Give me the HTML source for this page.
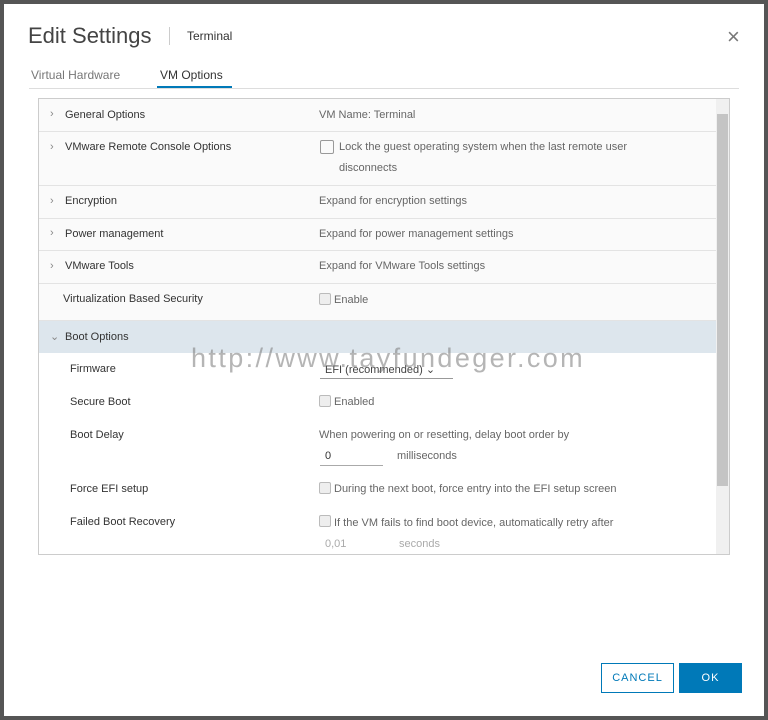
<!DOCTYPE html>
<html><head><style>
body{margin:0;width:768px;height:720px;background:#555;font-family:"Liberation Sans",sans-serif;position:relative;overflow:hidden}
.dlg{position:absolute;left:4px;top:4px;width:760px;height:712px;background:#fff}
.a{position:absolute;white-space:nowrap}
.t{font-size:11px;color:#333}
.g{font-size:11px;color:#666}
.row{position:absolute;left:0;width:678px;border-bottom:1px solid #e3e3e3}
.chev{position:absolute;font-size:11px;color:#888}
.cb{position:absolute;width:10px;height:10px;border:1px solid #bbb;background:#eee;border-radius:2px}
</style></head><body>
<div class="dlg"></div>
<div class="a" style="left:28px;top:23px;font-size:22px;color:#444">Edit Settings</div>
<div class="a" style="left:169px;top:27px;width:1px;height:18px;background:#ccc"></div>
<div class="a" style="left:187px;top:29px;font-size:12px;color:#333">Terminal</div>
<div class="a" style="left:727px;top:24px;font-size:22px;color:#777;font-weight:300">×</div>
<div class="a" style="left:31px;top:68px;font-size:12px;color:#777">Virtual Hardware</div>
<div class="a" style="left:160px;top:68px;font-size:12px;color:#333">VM Options</div>
<div class="a" style="left:157px;top:86px;width:75px;height:2px;background:#0079b8"></div>
<div class="a" style="left:29px;top:88px;width:710px;height:1px;background:#ddd"></div>
<div class="a" style="left:38px;top:98px;width:692px;height:457px;border:1px solid #ccc;box-sizing:border-box;background:#fff;overflow:hidden">
 <div class="row" style="top:0;height:32px;background:#fafafa"><span class="chev" style="left:11px;top:9px">›</span><span class="a t" style="left:26px;top:10px">General Options</span><span class="a g" style="left:280px;top:10px">VM Name: Terminal</span></div>
 <div class="row" style="top:33px;height:53px;background:#fafafa"><span class="chev" style="left:11px;top:9px">›</span><span class="a t" style="left:26px;top:9px">VMware Remote Console Options</span><span class="a" style="left:281px;top:8px;width:12px;height:12px;border:1px solid #999;border-radius:2px"></span><span class="a g" style="left:300px;top:5px;line-height:21px;white-space:normal;width:340px">Lock the guest operating system when the last remote user disconnects</span></div>
 <div class="row" style="top:87px;height:32px;background:#fafafa"><span class="chev" style="left:11px;top:9px">›</span><span class="a t" style="left:26px;top:9px">Encryption</span><span class="a g" style="left:280px;top:9px">Expand for encryption settings</span></div>
 <div class="row" style="top:120px;height:31px;background:#fafafa"><span class="chev" style="left:11px;top:8px">›</span><span class="a t" style="left:26px;top:9px">Power management</span><span class="a g" style="left:280px;top:9px">Expand for power management settings</span></div>
 <div class="row" style="top:152px;height:32px;background:#fafafa"><span class="chev" style="left:11px;top:9px">›</span><span class="a t" style="left:26px;top:9px">VMware Tools</span><span class="a g" style="left:280px;top:9px">Expand for VMware Tools settings</span></div>
 <div class="row" style="top:185px;height:36px;background:#fafafa"><span class="a t" style="left:24px;top:9px">Virtualization Based Security</span><span class="cb" style="left:280px;top:9px"></span><span class="a g" style="left:295px;top:10px">Enable</span></div>
 <div class="row" style="top:222px;height:32px;background:#dde6ed;border:0"><span class="chev" style="left:11px;top:9px">⌄</span><span class="a t" style="left:26px;top:10px">Boot Options</span></div>
 <span class="a t" style="left:31px;top:264px">Firmware</span><span class="a g" style="left:286px;top:264px;color:#444">EFI (recommended) ⌄</span><span class="a" style="left:281px;top:279px;width:133px;height:1px;background:#999"></span>
 <span class="a t" style="left:31px;top:297px">Secure Boot</span><span class="cb" style="left:280px;top:296px"></span><span class="a g" style="left:295px;top:297px">Enabled</span>
 <span class="a t" style="left:31px;top:330px">Boot Delay</span><span class="a g" style="left:280px;top:330px">When powering on or resetting, delay boot order by</span>
 <span class="a t" style="left:286px;top:351px">0</span><span class="a" style="left:281px;top:366px;width:63px;height:1px;background:#aaa"></span><span class="a g" style="left:358px;top:351px">milliseconds</span>
 <span class="a t" style="left:31px;top:384px">Force EFI setup</span><span class="cb" style="left:280px;top:383px"></span><span class="a g" style="left:295px;top:384px">During the next boot, force entry into the EFI setup screen</span>
 <span class="a t" style="left:31px;top:417px">Failed Boot Recovery</span><span class="cb" style="left:280px;top:416px"></span><span class="a g" style="left:295px;top:418px">If the VM fails to find boot device, automatically retry after</span>
 <span class="a" style="left:286px;top:439px;font-size:11px;color:#aaa">0,01</span><span class="a" style="left:360px;top:439px;font-size:11px;color:#aaa">seconds</span>
 <div class="a" style="left:677px;top:0;width:13px;height:455px;background:#f0f0f0"></div>
 <div class="a" style="left:678px;top:15px;width:11px;height:372px;background:#c4c4c4"></div>
</div>
<div class="a" style="left:191px;top:343px;font-size:27px;color:rgba(120,120,120,.55);letter-spacing:2.4px">http://www.tayfundeger.com</div>
<div class="a" style="left:601px;top:663px;width:73px;height:30px;border:1px solid #0079b8;box-sizing:border-box;color:#0079b8;font-size:11px;letter-spacing:1px;text-align:center;line-height:28px">CANCEL</div>
<div class="a" style="left:679px;top:663px;width:63px;height:30px;background:#0079b8;color:#fff;font-size:11px;letter-spacing:1px;text-align:center;line-height:30px">OK</div>
</body></html>
